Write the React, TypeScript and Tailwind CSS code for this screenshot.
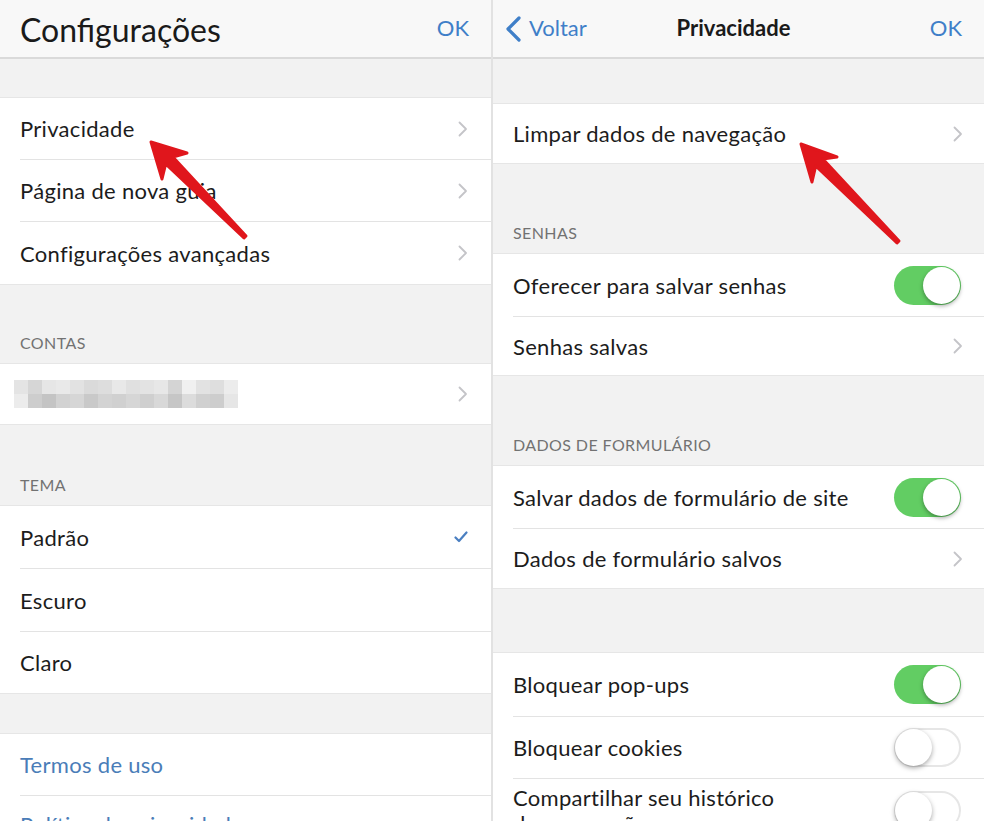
import React from 'react';

const font = { fontFamily: 'Lato, "Open Sans", sans-serif' };

function Chevron() {
    return (
        <svg width="10" height="16" viewBox="0 0 10 16" className="shrink-0">
            <polyline points="1.5,1.5 8,8 1.5,14.5" fill="none" stroke="#c4c4c8" strokeWidth="1.8" strokeLinecap="round" strokeLinejoin="round" />
        </svg>
    );
}

function Check() {
    return (
        <svg width="14" height="12" viewBox="0 0 14 12" className="shrink-0">
            <polyline points="1.5,6.5 5,10 12.5,1.5" fill="none" stroke="#4a7fc1" strokeWidth="2.2" strokeLinecap="round" strokeLinejoin="round" />
        </svg>
    );
}

function Toggle({ on }: { on: boolean }) {
    if (on) {
        return (
            <div className="w-[67px] h-[39px] rounded-full bg-[#62cd63] relative shrink-0">
                <div className="absolute right-[1px] top-[1px] w-[37px] h-[37px] rounded-full bg-white shadow-[0_2px_4px_rgba(0,0,0,0.35)]" />
            </div>
        );
    }
    return (
        <div className="w-[67px] h-[39px] rounded-full bg-white border-2 border-[#e6e6e6] relative shrink-0">
            <div className="absolute left-[-1px] top-[-1px] w-[37px] h-[37px] rounded-full bg-white shadow-[0_2px_5px_rgba(0,0,0,0.35)]" />
        </div>
    );
}

function Row({ label, h, right, last, blue, pr = 'pr-[23px]' }: { label: React.ReactNode; h: string; right?: React.ReactNode; last?: boolean; blue?: boolean; pr?: string }) {
    return (
        <div className={`pl-[20px] ${h}`}>
            <div className={`flex items-center justify-between h-full ${pr} ${last ? '' : 'border-b border-[#e3e3e3]'}`}>
                <span className={`text-[22px] tracking-[0.3px] ${blue ? 'text-[#4a7db8]' : 'text-[#1c1c1c]'}`}>{label}</span>
                {right}
            </div>
        </div>
    );
}

function Group({ children }: { children: React.ReactNode }) {
    return <div className="bg-white border-y border-[#e6e6e6]">{children}</div>;
}

function SectionLabel({ text, h }: { text: string; h: string }) {
    return (
        <div className={`${h} flex items-end pl-[20px] pb-[8px]`}>
            <span className="text-[16px] text-[#727272] tracking-[0.4px]">{text}</span>
        </div>
    );
}

const blurTop = ['#e4e4e4', '#d6d6d6', '#e6e6e6', '#e9e9e9', '#e2e2e2', '#dadada', '#dddddd', '#e8e8e8', '#e0e0e0', '#e3e3e3', '#e7e7e7', '#d4d4d4', '#f0f0f0', '#e2e2e2', '#dedede', '#ececec'];
const blurBottom = ['#ececec', '#cdcdcd', '#c4c4c4', '#d2d2d2', '#d6d6d6', '#c9c9c9', '#d3d3d3', '#d0d0d0', '#d6d6d6', '#cfcfcf', '#d8d8d8', '#c6c6c6', '#dcdcdc', '#d0d0d0', '#cdcdcd', '#e6e6e6'];

function BlurredAccount() {
    return (
        <div className="flex flex-col">
            <div className="flex">
                {blurTop.map((c, i) => (
                    <div key={i} className="w-[14px] h-[14px]" style={{ backgroundColor: c }} />
                ))}
            </div>
            <div className="flex">
                {blurBottom.map((c, i) => (
                    <div key={i} className="w-[14px] h-[14px]" style={{ backgroundColor: c }} />
                ))}
            </div>
        </div>
    );
}

function LeftPanel() {
    return (
        <div className="w-[491px] shrink-0 bg-[#f2f2f2]">
            <div className="h-[59px] bg-[#f8f8f8] border-b-2 border-[#dadada] flex items-center justify-between pl-[20px] pr-[22px]">
                <span className="text-[32px] text-[#1a1a1a] leading-none pt-[3px]">Configurações</span>
                <span className="text-[22px] text-[#3f7fc8] pb-[3px]">OK</span>
            </div>
            <div className="h-[38px]" />
            <Group>
                <Row label="Privacidade" h="h-[62px]" right={<Chevron />} />
                <Row label="Página de nova guia" h="h-[62px]" right={<Chevron />} />
                <Row label="Configurações avançadas" h="h-[62px]" right={<Chevron />} last />
            </Group>
            <SectionLabel text="CONTAS" h="h-[78px]" />
            <Group>
                <div className="h-[60px] flex items-center justify-between pl-[14px] pr-[23px]">
                    <BlurredAccount />
                    <Chevron />
                </div>
            </Group>
            <SectionLabel text="TEMA" h="h-[80px]" />
            <Group>
                <Row label="Padrão" h="h-[63px]" right={<Check />} />
                <Row label="Escuro" h="h-[63px]" />
                <Row label="Claro" h="h-[61px]" last />
            </Group>
            <div className="h-[39px]" />
            <Group>
                <Row label="Termos de uso" h="h-[62px]" blue />
                <Row label="Política de privacidade" h="h-[56px]" blue last />
            </Group>
        </div>
    );
}

function RightPanel() {
    return (
        <div className="flex-1 bg-[#f2f2f2]">
            <div className="h-[59px] bg-[#f8f8f8] border-b-2 border-[#dadada] grid grid-cols-3 items-center pl-[12px] pr-[22px]">
                <div className="flex items-center gap-[7px] text-[#3f7fc8]">
                    <svg width="17" height="26" viewBox="0 0 17 26">
                        <polyline points="14,2 3,13 14,24" fill="none" stroke="#3f7fc8" strokeWidth="3.2" strokeLinecap="round" strokeLinejoin="round" />
                    </svg>
                    <span className="text-[22px] pb-[3px]">Voltar</span>
                </div>
                <span className="text-[22px] font-bold text-[#1a1a1a] text-center pb-[3px]">Privacidade</span>
                <span className="text-[22px] text-[#3f7fc8] text-right pb-[3px]">OK</span>
            </div>
            <div className="h-[44px]" />
            <Group>
                <Row label="Limpar dados de navegação" h="h-[59px]" right={<Chevron />} pr="pr-[21px]" last />
            </Group>
            <SectionLabel text="SENHAS" h="h-[89px]" />
            <Group>
                <Row label="Oferecer para salvar senhas" h="h-[63px]" right={<Toggle on />} />
                <Row label="Senhas salvas" h="h-[58px]" right={<Chevron />} pr="pr-[21px]" last />
            </Group>
            <SectionLabel text="DADOS DE FORMULÁRIO" h="h-[89px]" />
            <Group>
                <Row label="Salvar dados de formulário de site" h="h-[63px]" right={<Toggle on />} />
                <Row label="Dados de formulário salvos" h="h-[59px]" right={<Chevron />} pr="pr-[21px]" last />
            </Group>
            <div className="h-[63px]" />
            <Group>
                <Row label="Bloquear pop-ups" h="h-[64px]" right={<Toggle on />} />
                <Row label="Bloquear cookies" h="h-[62px]" right={<Toggle on={false} />} />
                <div className="pl-[20px] h-[80px]">
                    <div className="flex items-start justify-between pr-[23px] pt-[6px]">
                        <span className="text-[22px] tracking-[0.3px] leading-[26px] text-[#1c1c1c] w-[265px]">Compartilhar seu histórico de navegação</span>
                        <div className="pt-[6px]">
                            <Toggle on={false} />
                        </div>
                    </div>
                </div>
            </Group>
        </div>
    );
}

function Arrows() {
    return (
        <svg className="absolute inset-0 pointer-events-none" width="984" height="821" viewBox="0 0 984 821">
            <polygon
                points="151,142 187,153 172.9,157 246,236 244,238 165.7,164 162,179"
                fill="#e0161c"
                stroke="#e0161c"
                strokeWidth="3"
                strokeLinejoin="round"
            />
            <polygon
                points="801,144 837,157 822.9,159 899,241 897,243 815.7,166 812,182"
                fill="#e0161c"
                stroke="#e0161c"
                strokeWidth="3"
                strokeLinejoin="round"
            />
        </svg>
    );
}

export default function App() {
    return (
        <div className="w-[984px] h-[821px] overflow-hidden relative bg-[#f2f2f2] flex" style={font}>
            <LeftPanel />
            <div className="w-[2px] shrink-0 bg-[#e2e2e2]" />
            <RightPanel />
            <Arrows />
        </div>
    );
}
